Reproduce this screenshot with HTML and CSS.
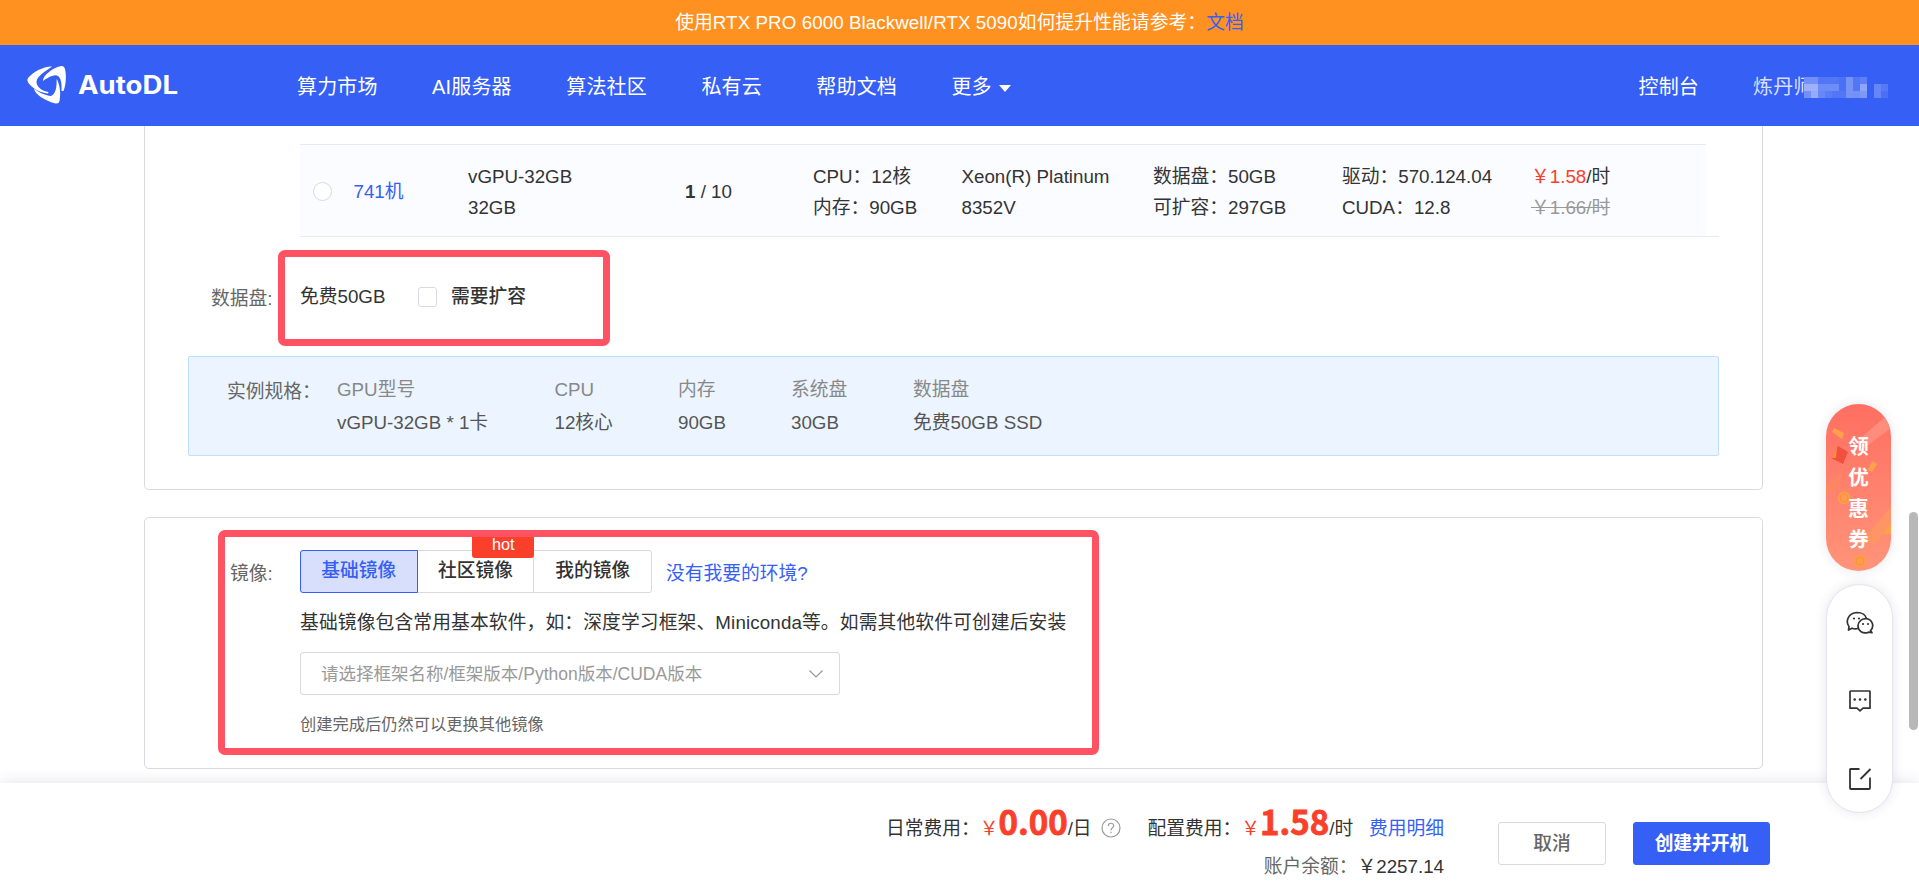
FILE: index.html
```html
<!DOCTYPE html>
<html lang="zh-CN">
<head>
    <meta charset="UTF-8">
    <title>AutoDL</title>
    <link rel="stylesheet" href="styles.css">
</head>
<body>
    <div class="notice">使用RTX PRO 6000 Blackwell/RTX 5090如何提升性能请参考：<a href="#">文档</a></div>

    <header class="header">
        <a href="#" class="logo">
            <svg width="156" height="42" viewBox="0 0 156 42" fill="#fff">
                <path d="M26 2.5C18 2 7 8 2 14Q.5 16 2 18.500C6 24 14 29 22 29.500L22.500 28C16 27 10.500 23 10.500 18C10.500 12 20 7 26 2.500Z"/>
                <path d="M17 17C16.500 12 26 4 35 2Q38 1.500 39 5C40.500 12 40 21 37.500 27L35.500 27C36 20 35 14 32 12C28 9.500 20 15 17 17Z"/>
                <path d="M8 24.500C12 28 19 31.500 25 32C30 30 31 22 30.500 15C34 20 35 30 33.500 37Q33 40 29.500 39.500C20 37 9 31 8 24.500Z"/>
                <text class="logo-text" x="52" y="30" textLength="100" lengthAdjust="spacingAndGlyphs">AutoDL</text>
            </svg>
        </a>
        <nav class="nav">
            <a href="#">算力市场</a>
            <a href="#">AI服务器</a>
            <a href="#">算法社区</a>
            <a href="#">私有云</a>
            <a href="#">帮助文档</a>
            <a href="#">更多<i class="caret"></i></a>
        </nav>
        <div class="user">
            <a href="#">控制台</a>
            <span class="user-name">炼丹师
                <svg class="mosaic" width="86" height="28" viewBox="0 0 86 28">
                    <rect width="86" height="28" fill="#3660f5"/>
                    <g fill="#fff">
                        <rect x="0" y="0" width="14" height="21" opacity=".3"/>
                        <rect x="0" y="7" width="14" height="7" opacity=".3"/>
                        <rect x="7" y="14" width="7" height="7" opacity=".25"/>
                        <rect x="14" y="0" width="21" height="7" opacity=".14"/>
                        <rect x="14" y="7" width="21" height="7" opacity=".28"/>
                        <rect x="14" y="14" width="7" height="7" opacity=".25"/>
                        <rect x="21" y="14" width="7" height="7" opacity=".18"/>
                        <rect x="28" y="14" width="14" height="7" opacity=".14"/>
                        <rect x="35" y="0" width="7" height="14" opacity=".1"/>
                        <rect x="42" y="0" width="7" height="21" opacity=".32"/>
                        <rect x="49" y="0" width="7" height="21" opacity=".14"/>
                        <rect x="49" y="14" width="14" height="7" opacity=".2"/>
                        <rect x="56" y="0" width="7" height="21" opacity=".2"/>
                        <rect x="56" y="7" width="7" height="7" opacity=".3"/>
                        <rect x="70" y="7" width="7" height="14" opacity=".24"/>
                        <rect x="77" y="7" width="7" height="7" opacity=".16"/>
                        <rect x="77" y="14" width="7" height="7" opacity=".1"/>
                    </g>
                </svg>
            </span>
        </div>
    </header>

    <main class="main">
        <!-- Machine -->
        <section class="card card-machine">
            <div class="machine-row">
                <span class="radio"></span>
                <a href="#">741机</a>
                <div>vGPU-32GB<br>32GB</div>
                <div><b>1</b> / 10</div>
                <div>CPU：12核<br>内存：90GB</div>
                <div>Xeon(R) Platinum<br>8352V</div>
                <div>数据盘：50GB<br>可扩容：297GB</div>
                <div>驱动：570.124.04<br>CUDA：12.8</div>
                <div><span class="red">￥1.58</span>/时<br><s>￥1.66/时</s></div>
            </div>
            <div class="row-line"></div>

            <div class="disk">
                <span class="label">数据盘:</span>
                <span class="disk-free">免费50GB</span>
                <span class="checkbox"></span>
                <span class="disk-expand">需要扩容</span>
                <div class="mark mark-disk"></div>
            </div>

            <div class="spec">
                <span class="spec-label">实例规格：</span>
                <dl><dt>GPU型号</dt><dd>vGPU-32GB * 1卡</dd></dl>
                <dl><dt>CPU</dt><dd>12核心</dd></dl>
                <dl><dt>内存</dt><dd>90GB</dd></dl>
                <dl><dt>系统盘</dt><dd>30GB</dd></dl>
                <dl><dt>数据盘</dt><dd>免费50GB SSD</dd></dl>
            </div>
        </section>

        <!-- Image -->
        <section class="card card-image">
            <span class="label">镜像:</span>
            <div class="image-body">
                <div class="image-top">
                    <div class="tabs">
                        <span class="tab active">基础镜像</span>
                        <span class="tab">社区镜像<em class="hot">hot</em></span>
                        <span class="tab">我的镜像</span>
                    </div>
                    <a href="#">没有我要的环境?</a>
                </div>
                <p class="desc">基础镜像包含常用基本软件，如：深度学习框架、Miniconda等。如需其他软件可创建后安装</p>
                <div class="select">
                    <span>请选择框架名称/框架版本/Python版本/CUDA版本</span>
                    <svg width="16" height="10" viewBox="0 0 16 10" fill="none" stroke="#999" stroke-width="1.2"><path d="M1.500 1.500L8 8L14.500 1.500"/></svg>
                </div>
                <p class="tip">创建完成后仍然可以更换其他镜像</p>
            </div>
            <div class="mark mark-image"></div>
        </section>
    </main>

    <footer class="footer">
        <div class="fees">
            <div class="fee-line">
                <span>日常费用：</span><span class="red">￥</span><strong>0.00</strong><span>/日</span>
                <svg class="help" width="20" height="20" viewBox="0 0 20 20" fill="none" stroke="#999" stroke-width="1.200"><circle cx="10" cy="10" r="9"/><path d="M7.300 8C7.300 4.400 12.700 4.400 12.700 7.800C12.700 9.800 10 9.800 10 12.200"/><path d="M10 13.800V15.200"/></svg>
                <span>配置费用：</span><span class="red">￥</span><strong>1.58</strong><span>/时</span>
                <a href="#">费用明细</a>
            </div>
            <div class="balance"><span>账户余额：</span>￥2257.14</div>
        </div>
        <button class="btn">取消</button>
        <button class="btn btn-primary">创建并开机</button>
    </footer>

    <!-- Side tools -->
    <aside class="side">
        <div class="coupon">
            <svg class="coupon-bg" width="65" height="167" viewBox="0 0 65 167">
                <path d="M30 38L65 8V24L38 44Z" fill="#ff8d7d"/>
                <path d="M0 80L18 68L10 84L0 91Z" fill="#ff8663"/>
                <path d="M34 139L65 103V124L49 139Z" fill="#ff9464"/>
                <path d="M8 24L18 29L16 35L6 28Z" fill="#fda14a"/>
                <path d="M46 57L51 60L46 68L42 66Z" fill="#fda14a"/>
                <path d="M65 120V130L60 131L58 128Z" fill="#fda14a"/>
                <path d="M12 42L22 48L17 60L5 54Z" fill="#f2503f"/>
                <path d="M5 54L11 43L10 54Z" fill="#fb8b42"/>
                <circle cx="18" cy="94" r="6.500" fill="#fd9d4d"/>
                <circle cx="18" cy="94" r="4" fill="none" stroke="#fb8f40"/>
                <circle cx="34" cy="157" r="6.500" fill="#fd9d4d"/>
                <circle cx="34" cy="157" r="4" fill="none" stroke="#fb8f40"/>
            </svg>
            <span>领</span><span>优</span><span>惠</span><span>券</span>
        </div>
        <div class="tools">
            <svg width="28" height="24" viewBox="0 0 28 24" fill="none" stroke="#333" stroke-width="1.700" stroke-linejoin="round">
                <path d="M12 17.500C10 18 8 17.900 6 17.200L2.500 19L3 15.500C-.5 11 1.500 2 11 1.500C16 1.500 19.500 4 20.500 7.500"/>
                <path d="M24.500 19.500L26 21.700L22.500 21.200C17 23.500 11.800 20 12 14.500C12.500 9.500 17 7.500 20 7.600C26 8 29 15 24.500 19.500Z"/>
                <g fill="#333" stroke="none"><circle cx="8" cy="7.500" r="1.100"/><circle cx="13" cy="7.500" r="1.100"/><circle cx="17" cy="13" r="1.100"/><circle cx="22" cy="13" r="1.100"/></g>
            </svg>
            <svg width="24" height="24" viewBox="0 0 24 24" fill="none" stroke="#333" stroke-width="1.700" stroke-linejoin="round">
                <path d="M2.500 2H21.500Q22 2 22 2.500V19.200H15L12 21.800L9 19.200H2V2.500Z"/>
                <g fill="#333" stroke="none"><circle cx="6.700" cy="10.500" r="1.300"/><circle cx="12" cy="10.500" r="1.300"/><circle cx="17.300" cy="10.500" r="1.300"/></g>
            </svg>
            <svg width="24" height="24" viewBox="0 0 24 24" fill="none" stroke="#333" stroke-width="1.800" stroke-linejoin="round">
                <path d="M11.500 2H2.500Q2 2 2 3V21.500Q2 22 3 22H21Q22 22 22 21V10.500"/>
                <path d="M12.500 12L22.500 2"/>
            </svg>
        </div>
    </aside>
    <div class="scrollbar"></div>
</body>
</html>
```

FILE: styles.css
```css
* {
    box-sizing: border-box;
}
body {
    margin: 0;
    height: 891px;
    overflow: hidden;
    position: relative;
    display: flex;
    flex-direction: column;
    background: #fff;
    color: #333;
    font-family: "Liberation Sans", "Noto Sans CJK SC", sans-serif;
    font-size: 18.75px;
}
a {
    color: #3660f5;
    text-decoration: none;
}
p, dl, dd {
    margin: 0;
}
.red {
    color: #fa402b;
}

/* Top */
.notice {
    height: 45px;
    line-height: 45px;
    text-align: center;
    letter-spacing: .08px;
    background: #ff9121;
    color: #fff;
}
.header {
    height: 81px;
    display: flex;
    align-items: center;
    padding: 0 30px 0 26px;
    background: #3660f5;
    font-size: 20px;
    line-height: 30px;
}
.header a {
    color: #fff;
}
.logo {
    width: 271px;
    height: 42px;
    margin-top: -2px;
}
.logo-text {
    font-family: Inter, sans-serif;
    font-size: 25px;
    font-weight: 700;
}
.nav {
    display: flex;
    gap: 54.5px;
    padding-top: 2px;
    letter-spacing: .15px;
}
.caret {
    display: inline-block;
    margin-left: 7px;
    vertical-align: 2px;
    border: 6.5px solid transparent;
    border-top: 7px solid #fff;
    border-bottom: 0;
}
.user {
    margin-left: auto;
    padding-top: 2px;
    display: flex;
    gap: 54px;
    letter-spacing: .15px;
}
.user-name {
    position: relative;
    width: 136px;
    color: #d7dffd;
}
.mosaic {
    position: absolute;
    left: 51px;
    top: 5px;
}

/* Cards */
.main {
    height: 657px;
}
.card {
    position: relative;
    width: 1619px;
    margin-left: 144px;
    border: 1px solid #d9dae0;
    border-radius: 5px;
}
.card-machine {
    height: 364px;
    border-top: 0;
    border-radius: 0 0 5px 5px;
    padding-top: 18px;
}
.machine-row {
    width: 1406px;
    height: 92px;
    margin-left: 155px;
    padding: 2px 0 0 13px;
    display: grid;
    grid-template-columns: 40.5px 114.5px 217px 128px 148.5px 191.5px 189px 189px 1fr;
    align-items: center;
    line-height: 31px;
    white-space: nowrap;
    background: #fafcff;
    border-top: 1px solid #e6eaf3;
}
.machine-row s {
    color: #999;
}
.radio {
    width: 19px;
    height: 19px;
    border: 1px solid #d9dae0;
    border-radius: 50%;
    background: #fff;
}
.row-line {
    width: 1419px;
    height: 1px;
    margin-left: 155px;
    background: #e6eaf3;
}
.label {
    color: #666;
}
.disk {
    position: relative;
    height: 119px;
    padding-left: 66px;
    display: flex;
    align-items: center;
    line-height: 30px;
}
.disk .label {
    width: 89px;
    padding-top: 4px;
}
.disk-free {
    width: 118px;
}
.checkbox {
    width: 19px;
    height: 20px;
    border: 1px solid #d9dae0;
    border-radius: 3px;
}
.disk-expand {
    margin-left: 14px;
    font-weight: 500;
}
.spec {
    width: 1531px;
    height: 100px;
    margin-left: 43px;
    padding: 16px 0 0 38px;
    display: grid;
    grid-template-columns: 110px 217.5px 123.5px 113px 122px 1fr;
    background: #ecf5ff;
    border: 1px solid #bfdfff;
    border-radius: 2px;
    line-height: 33px;
    color: #555;
}
.spec-label {
    padding-top: 2px;
    color: #666;
}
.spec dt {
    color: #888;
}
.card-image {
    height: 252px;
    margin-top: 27px;
    padding: 32px 0 0 85px;
    display: flex;
}
.card-image > .label {
    width: 70px;
    line-height: 48px;
}
.image-top {
    height: 46px;
    display: flex;
    gap: 14px;
    line-height: 48px;
}
.tabs {
    display: flex;
    width: 352px;
    height: 43px;
    border: 1px solid #d7d9e2;
    border-radius: 3px;
}
.tab {
    position: relative;
    width: 117px;
    line-height: 40px;
    text-align: center;
    font-weight: 500;
    border-right: 1px solid #d7d9e2;
}
.tab:last-child {
    border-right: 0;
}
.tab.active {
    width: 118px;
    margin: -1px 0 -1px -1px;
    background: #d7dffd;
    border: 1px solid #3660f5;
    border-radius: 3px 0 0 3px;
    color: #3660f5;
}
.hot {
    position: absolute;
    right: -1px;
    top: -20px;
    width: 62px;
    height: 27px;
    line-height: 27px;
    background: #fa402b;
    border-radius: 3px;
    color: #fff;
    font-size: 16.25px;
    font-style: normal;
    font-weight: 400;
}
.desc {
    margin-top: 12px;
    line-height: 30px;
    letter-spacing: .13px;
}
.select {
    width: 540px;
    height: 43px;
    margin-top: 14px;
    padding: 0 15px 3px 20px;
    display: flex;
    align-items: center;
    justify-content: space-between;
    border: 1px solid #d7d9e2;
    border-radius: 3px;
    font-size: 17.5px;
    color: #999;
}
.select svg {
    margin-top: 4px;
}
.tip {
    margin-top: 14px;
    font-size: 16.25px;
    line-height: 30px;
    color: #666;
}

/* Red frames */
.mark {
    position: absolute;
    border: 7.5px solid #ff5263;
    border-radius: 7px;
}
.mark-disk {
    left: 133px;
    top: 13px;
    width: 332px;
    height: 96px;
}
.mark-image {
    left: 73px;
    top: 12px;
    width: 881px;
    height: 225px;
}

/* Footer */
.footer {
    position: relative;
    height: 108px;
    padding-right: 149px;
    display: flex;
    justify-content: flex-end;
    background: #fff;
    box-shadow: 0 0 15px rgba(60, 60, 110, .15);
}
.fees {
    width: 558px;
    margin-right: 54px;
    padding-top: 13px;
}
.fee-line {
    display: flex;
    align-items: baseline;
    height: 50px;
    line-height: 50px;
    white-space: nowrap;
}
.fee-line strong {
    font-family: "Noto Sans CJK SC", sans-serif;
    font-size: 33px;
    color: #fa402b;
    -webkit-text-stroke: .8px #fa402b;
}
.fee-line a {
    margin-left: auto;
}
.help {
    align-self: center;
    margin: 14px 27px 0 9px;
}
.balance {
    margin-top: 6px;
    line-height: 30px;
    text-align: right;
}
.balance span {
    color: #666;
}
.btn {
    width: 108px;
    height: 43px;
    margin-top: 39px;
    padding: 0 0 4px;
    background: #fff;
    border: 1px solid #d7d9e2;
    border-radius: 3px;
    color: #666;
    font-family: inherit;
    font-size: 18.75px;
    font-weight: 500;
}
.btn-primary {
    width: 137px;
    margin-left: 27px;
    background: #3660f5;
    border-color: #3660f5;
    color: #fff;
    font-weight: 700;
}

/* Side */
.side {
    position: absolute;
    top: 404px;
    left: 1826px;
}
.coupon {
    position: relative;
    width: 65px;
    height: 167px;
    padding-top: 27px;
    display: flex;
    flex-direction: column;
    align-items: center;
    overflow: hidden;
    background: linear-gradient(#ff6f61, #ff9479);
    border-radius: 33px;
    box-shadow: 0 0 12px rgba(60, 60, 110, .12);
    color: #fff;
    font-size: 20.5px;
    font-weight: 700;
    line-height: 31px;
}
.coupon span {
    position: relative;
}
.coupon-bg {
    position: absolute;
    left: 0;
    top: 0;
}
.tools {
    width: 67px;
    height: 229px;
    margin-top: 13px;
    padding: 26px 0 21px;
    display: flex;
    flex-direction: column;
    align-items: center;
    justify-content: space-between;
    background: #fff;
    border: 1px solid #e3e4f0;
    border-radius: 34px;
    box-shadow: 0 0 12px rgba(60, 60, 110, .12);
}
.scrollbar {
    position: absolute;
    left: 1909px;
    top: 512px;
    width: 9px;
    height: 218px;
    border-radius: 5px;
    background: #b8b8b8;
}
```
